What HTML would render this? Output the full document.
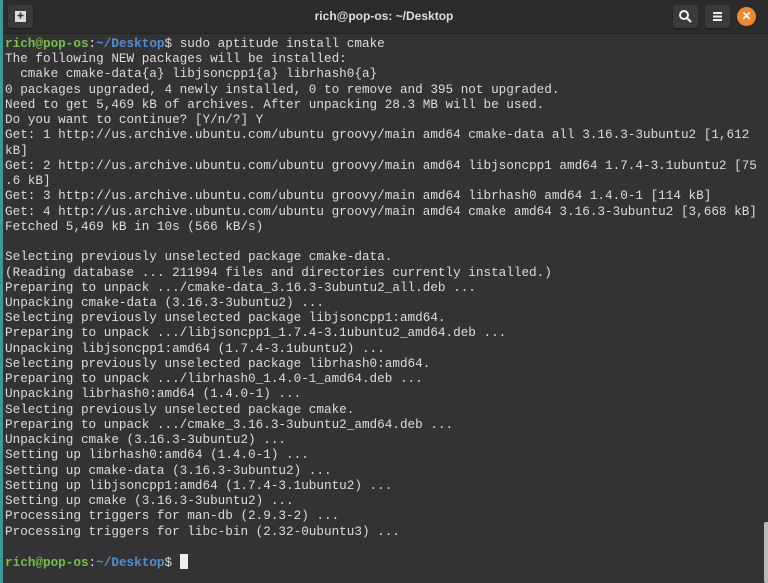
<!DOCTYPE html>
<html><head><meta charset="utf-8"><style>
body{margin:0;width:768px;height:583px;overflow:hidden;background:#333;position:relative;font-family:"Liberation Mono",monospace}
#tb{position:absolute;left:0;top:0;width:768px;height:33px;background:#2b2b2b;border-bottom:1px solid #222}
#title{position:absolute;left:0;right:0;top:9px;text-align:center;color:#ddd;font:bold 12px "Liberation Sans",sans-serif}
.btn{position:absolute;top:5px;width:25px;height:23px;background:#3a3a3a;border-radius:3px;box-shadow:0 1px 1px #1a1a1a}
#close{position:absolute;left:737px;top:7px;width:19px;height:19px;border-radius:50%;background:#f0872c;color:#fff;font:bold 12px "Liberation Sans",sans-serif;text-align:center;line-height:19px}
#teal{position:absolute;left:0;top:0;width:3px;height:583px;background:#3a9a9a}
pre{position:absolute;left:5px;top:36px;margin:0;color:#dcdcdc;font:12.67px/15.24px "Liberation Mono",monospace}
.g{color:#73c048;font-weight:bold}.b{color:#4f8fd6;font-weight:bold}
.cur{display:inline-block;width:8px;height:15px;background:#eee;vertical-align:-3px}
#sb{position:absolute;left:764px;top:522px;width:4px;height:61px;background:#bbb;border-radius:2px 0 0 2px}
</style></head><body>
<div id="tb">
<div class="btn" style="left:8px"><svg width="25" height="23"><rect x="7" y="6" width="11" height="9" fill="#ddd"/><rect x="7" y="15" width="11" height="2" fill="#ddd"/><path d="M12.5 7.5v6M9.5 10.5h6" stroke="#333" stroke-width="1.6"/></svg></div>
<div id="title">rich@pop-os: ~/Desktop</div>
<div class="btn" style="left:673px"><svg width="25" height="23"><circle cx="11" cy="10" r="4" stroke="#eee" stroke-width="2" fill="none"/><path d="M14 13l4 4" stroke="#eee" stroke-width="2.2"/></svg></div>
<div class="btn" style="left:705px"><svg width="25" height="23"><path d="M8 8h9M8 11.5h9M8 15h9" stroke="#eee" stroke-width="2"/></svg></div>
<div id="close">✕</div>
</div>
<div id="teal"></div>
<pre><span class="g">rich@pop-os</span>:<span class="b">~/Desktop</span>$ sudo aptitude install cmake
The following NEW packages will be installed:
  cmake cmake-data{a} libjsoncpp1{a} librhash0{a}
0 packages upgraded, 4 newly installed, 0 to remove and 395 not upgraded.
Need to get 5,469 kB of archives. After unpacking 28.3 MB will be used.
Do you want to continue? [Y/n/?] Y
Get: 1 http://us.archive.ubuntu.com/ubuntu groovy/main amd64 cmake-data all 3.16.3-3ubuntu2 [1,612
kB]
Get: 2 http://us.archive.ubuntu.com/ubuntu groovy/main amd64 libjsoncpp1 amd64 1.7.4-3.1ubuntu2 [75
.6 kB]
Get: 3 http://us.archive.ubuntu.com/ubuntu groovy/main amd64 librhash0 amd64 1.4.0-1 [114 kB]
Get: 4 http://us.archive.ubuntu.com/ubuntu groovy/main amd64 cmake amd64 3.16.3-3ubuntu2 [3,668 kB]
Fetched 5,469 kB in 10s (566 kB/s)

Selecting previously unselected package cmake-data.
(Reading database ... 211994 files and directories currently installed.)
Preparing to unpack .../cmake-data_3.16.3-3ubuntu2_all.deb ...
Unpacking cmake-data (3.16.3-3ubuntu2) ...
Selecting previously unselected package libjsoncpp1:amd64.
Preparing to unpack .../libjsoncpp1_1.7.4-3.1ubuntu2_amd64.deb ...
Unpacking libjsoncpp1:amd64 (1.7.4-3.1ubuntu2) ...
Selecting previously unselected package librhash0:amd64.
Preparing to unpack .../librhash0_1.4.0-1_amd64.deb ...
Unpacking librhash0:amd64 (1.4.0-1) ...
Selecting previously unselected package cmake.
Preparing to unpack .../cmake_3.16.3-3ubuntu2_amd64.deb ...
Unpacking cmake (3.16.3-3ubuntu2) ...
Setting up librhash0:amd64 (1.4.0-1) ...
Setting up cmake-data (3.16.3-3ubuntu2) ...
Setting up libjsoncpp1:amd64 (1.7.4-3.1ubuntu2) ...
Setting up cmake (3.16.3-3ubuntu2) ...
Processing triggers for man-db (2.9.3-2) ...
Processing triggers for libc-bin (2.32-0ubuntu3) ...

<span class="g">rich@pop-os</span>:<span class="b">~/Desktop</span>$ <span class="cur"></span></pre>
<div id="sb"></div>
</body></html>
